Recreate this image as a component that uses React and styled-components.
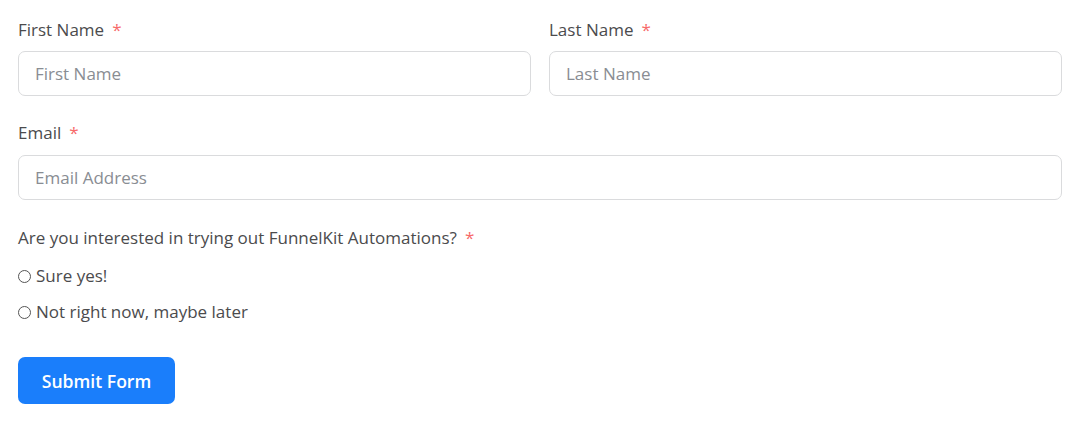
import React from 'react';
import styled, { createGlobalStyle } from 'styled-components';

const GlobalStyle = createGlobalStyle`
  body {
    margin: 0;
    background: #fff;
    font-family: "Open Sans", "Noto Sans", sans-serif;
  }
`

const Form = styled.form`
  padding: 18px 18px 0 18px;
  display: flex;
  flex-direction: column;
`

const Row = styled.div`
  display: grid;
  grid-template-columns: 1fr 1fr;
  gap: 18px;
  margin-bottom: 25px;
`

const Group = styled.div`
  display: flex;
  flex-direction: column;
  margin-bottom: ${props => props.mb || 0}px;
`

const Label = styled.label`
  font-size: 17px;
  line-height: 24px;
  color: #4b4b4d;
  margin-bottom: ${props => props.mb || 9}px;
`

const Star = styled.span`
  color: #f76a6a;
  margin-left: 8px;
`

const Input = styled.input`
  box-sizing: border-box;
  height: 45px;
  border: 1px solid #dadbdd;
  border-radius: 7px;
  padding: 0 16px;
  font-family: inherit;
  font-size: 17px;
  color: #444;
  outline: none;

  &::placeholder {
    color: #898d93;
  }
`

const RadioRow = styled.label`
  display: flex;
  align-items: center;
  font-size: 17px;
  line-height: 24px;
  color: #4b4b4d;
  margin-bottom: 12px;
`

const Circle = styled.span`
  box-sizing: border-box;
  width: 13px;
  height: 13px;
  border: 1px solid #555;
  border-radius: 50%;
  margin-right: 5px;
`

const Button = styled.button`
  align-self: flex-start;
  margin-top: 21px;
  height: 47px;
  width: 157px;
  padding: 0;
  border: none;
  border-radius: 7px;
  background: #1a7efb;
  color: #fff;
  font-family: inherit;
  font-size: 17.6px;
  font-weight: 600;
`

const App = () => {
  return (
    <>
      <GlobalStyle />
      <Form onSubmit={e => e.preventDefault()}>
        <Row>
          <Group>
            <Label>First Name<Star>*</Star></Label>
            <Input placeholder="First Name" />
          </Group>
          <Group>
            <Label>Last Name<Star>*</Star></Label>
            <Input placeholder="Last Name" />
          </Group>
        </Row>
        <Group mb={26}>
          <Label mb={10}>Email<Star>*</Star></Label>
          <Input placeholder="Email Address" />
        </Group>
        <Label mb={14}>Are you interested in trying out FunnelKit Automations?<Star>*</Star></Label>
        <RadioRow><Circle />Sure yes!</RadioRow>
        <RadioRow><Circle />Not right now, maybe later</RadioRow>
        <Button type="submit">Submit Form</Button>
      </Form>
    </>
  );
}

export default App;
